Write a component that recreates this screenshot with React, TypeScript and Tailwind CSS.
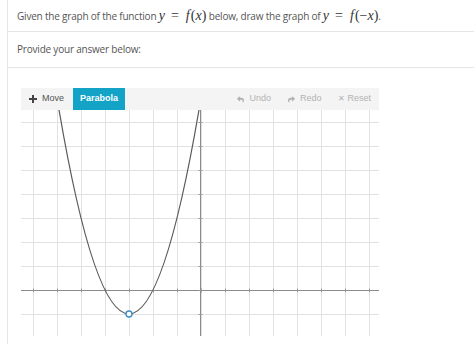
import { FaReply, FaShare } from "react-icons/fa";

// ─── Math bits (italic serif like KaTeX) ─────────────────────────────────────
function M({ children }: { children: React.ReactNode }) {
  return <span className="font-['Liberation_Serif',serif] text-[14px] tracking-normal text-[#333]">{children}</span>;
}

function I({ children }: { children: React.ReactNode }) {
  return <i>{children}</i>;
}

function Eq() {
  return <span className="mx-[6px]">=</span>;
}

function F() {
  return <i className="mx-[1px]">f</i>;
}

// ─── Graph grid + parabola ────────────────────────────────────────────────────
function Plot() {
  const W = 358;
  const H = 226;
  const cols = Array.from({ length: 15 }, (_, k) => 12 + 24 * k);
  const rows = Array.from({ length: 9 }, (_, k) => 12 + 24 * k);
  const ox = 180;
  const oy = 180;

  // vertex at (-3,-1) in grid units, y = (x+3)^2 - 1
  const vx = ox - 3 * 24;
  const vy = oy + 24;
  const a = Math.sqrt(vy * 24);

  return (
    <svg width={W} height={H} className="block">
      {cols.map((x) => (
        <line key={"c" + x} x1={x + 0.5} y1={0} x2={x + 0.5} y2={H} stroke="#e2e2e2" strokeWidth={1} />
      ))}
      {rows.map((y) => (
        <line key={"r" + y} x1={0} y1={y + 0.5} x2={W} y2={y + 0.5} stroke="#e2e2e2" strokeWidth={1} />
      ))}
      <line x1={ox - 0.5} y1={0} x2={ox - 0.5} y2={H} stroke="#8a8a8a" strokeWidth={1} />
      <line x1={0} y1={oy + 0.5} x2={W} y2={oy + 0.5} stroke="#8a8a8a" strokeWidth={1} />
      {cols.map((x) => (
        <line key={"tx" + x} x1={x + 0.5} y1={oy - 1.5} x2={x + 0.5} y2={oy + 2.5} stroke="#9a9a9a" strokeWidth={1} />
      ))}
      {rows.map((y) => (
        <line key={"ty" + y} x1={ox - 2.5} y1={y + 0.5} x2={ox + 1.5} y2={y + 0.5} stroke="#9a9a9a" strokeWidth={1} />
      ))}
      <path
        d={`M ${vx - a} 0 Q ${vx} ${vy * 2} ${vx + a} 0`}
        fill="none"
        stroke="#5a5a5a"
        strokeWidth={1.2}
      />
      <circle cx={vx} cy={vy} r={3} fill="#fff" stroke="#3b8fc4" strokeWidth={1.4} />
    </svg>
  );
}

// ─── Toolbar ──────────────────────────────────────────────────────────────────
function Toolbar() {
  return (
    <div className="flex h-[22px] items-stretch bg-[#f4f4f4] font-['Liberation_Sans',Arial,sans-serif] text-[9px]">
      <div className="flex items-center gap-[5px] pl-[8px] pr-[9px] text-[#555]">
        <svg width="8" height="8" viewBox="0 0 8 8">
          <path d="M3 0h2v3h3v2H5v3H3V5H0V3h3z" fill="#444" />
        </svg>
        <span>Move</span>
      </div>
      <div className="flex w-[52px] items-center justify-center bg-[#12a3c6] font-bold text-white">Parabola</div>
      <div className="ml-auto flex items-center gap-[17px] pr-[8px] text-[#b3b3b3]">
        <span className="flex items-center gap-[5px]">
          <FaReply size={7} />
          Undo
        </span>
        <span className="flex items-center gap-[5px]">
          <FaShare size={7} />
          Redo
        </span>
        <span className="flex items-center gap-[2px]">
          <span className="text-[8px]">✕</span>
          Reset
        </span>
      </div>
    </div>
  );
}

export default function App() {
  return (
    <div className="h-[344px] w-[474px] overflow-hidden bg-white pl-[7px] font-['Open_Sans',sans-serif] text-[10px] text-[#555]">
      <div className="h-full border-l border-[#e6e6e6]">
        <div className="flex h-[32px] items-center border-b border-[#e6e6e6] pl-[9px] tracking-[-0.2px]">
          <span>
            Given the graph of the function{" "}
            <M>
              <I>y</I>
              <Eq />
              <F />(<I>x</I>)
            </M>{" "}
            below, draw the graph of{" "}
            <M>
              <I>y</I>
              <Eq />
              <F />(−<I>x</I>)
            </M>
            .
          </span>
        </div>
        <div className="flex h-[36px] items-center border-b border-[#e6e6e6] pl-[9px] tracking-[-0.2px]">
          Provide your answer below:
        </div>
        <div className="pl-[13px] pt-[20px]">
          <div className="w-[358px]">
            <Toolbar />
            <Plot />
          </div>
        </div>
      </div>
    </div>
  );
}
